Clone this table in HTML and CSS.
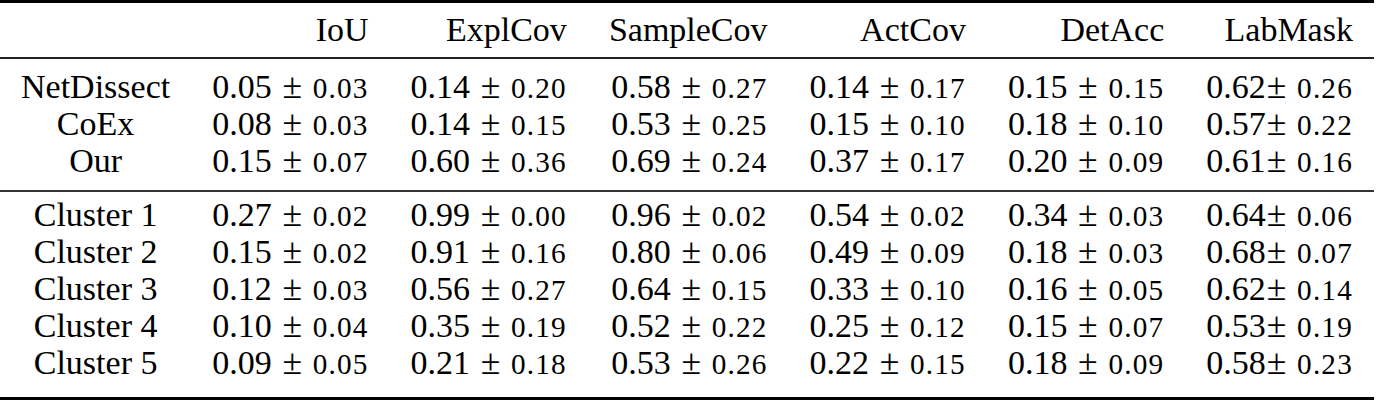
FILE: index.html
```html
<!DOCTYPE html>
<html>
<head>
<meta charset="utf-8">
<link rel="stylesheet" href="styles.css">
</head>
<body>
<table class="results">
  <thead>
    <tr class="head">
      <th class="name"></th>
      <th>IoU</th>
      <th>ExplCov</th>
      <th>SampleCov</th>
      <th>ActCov</th>
      <th>DetAcc</th>
      <th>LabMask</th>
    </tr>
  </thead>
  <tbody>
    <tr class="first">
      <td class="name">NetDissect</td>
      <td>0.05<span class="pm">±</span><span class="sd">0.03</span></td>
      <td>0.14<span class="pm">±</span><span class="sd">0.20</span></td>
      <td>0.58<span class="pm">±</span><span class="sd">0.27</span></td>
      <td>0.14<span class="pm">±</span><span class="sd">0.17</span></td>
      <td>0.15<span class="pm">±</span><span class="sd">0.15</span></td>
      <td>0.62<span class="pm tight">±</span><span class="sd">0.26</span></td>
    </tr>
    <tr>
      <td class="name">CoEx</td>
      <td>0.08<span class="pm">±</span><span class="sd">0.03</span></td>
      <td>0.14<span class="pm">±</span><span class="sd">0.15</span></td>
      <td>0.53<span class="pm">±</span><span class="sd">0.25</span></td>
      <td>0.15<span class="pm">±</span><span class="sd">0.10</span></td>
      <td>0.18<span class="pm">±</span><span class="sd">0.10</span></td>
      <td>0.57<span class="pm tight">±</span><span class="sd">0.22</span></td>
    </tr>
    <tr class="mid">
      <td class="name">Our</td>
      <td>0.15<span class="pm">±</span><span class="sd">0.07</span></td>
      <td>0.60<span class="pm">±</span><span class="sd">0.36</span></td>
      <td>0.69<span class="pm">±</span><span class="sd">0.24</span></td>
      <td>0.37<span class="pm">±</span><span class="sd">0.17</span></td>
      <td>0.20<span class="pm">±</span><span class="sd">0.09</span></td>
      <td>0.61<span class="pm tight">±</span><span class="sd">0.16</span></td>
    </tr>
  </tbody>
  <tbody>
    <tr class="second">
      <td class="name">Cluster 1</td>
      <td>0.27<span class="pm">±</span><span class="sd">0.02</span></td>
      <td>0.99<span class="pm">±</span><span class="sd">0.00</span></td>
      <td>0.96<span class="pm">±</span><span class="sd">0.02</span></td>
      <td>0.54<span class="pm">±</span><span class="sd">0.02</span></td>
      <td>0.34<span class="pm">±</span><span class="sd">0.03</span></td>
      <td>0.64<span class="pm tight">±</span><span class="sd">0.06</span></td>
    </tr>
    <tr>
      <td class="name">Cluster 2</td>
      <td>0.15<span class="pm">±</span><span class="sd">0.02</span></td>
      <td>0.91<span class="pm">±</span><span class="sd">0.16</span></td>
      <td>0.80<span class="pm">±</span><span class="sd">0.06</span></td>
      <td>0.49<span class="pm">±</span><span class="sd">0.09</span></td>
      <td>0.18<span class="pm">±</span><span class="sd">0.03</span></td>
      <td>0.68<span class="pm tight">±</span><span class="sd">0.07</span></td>
    </tr>
    <tr>
      <td class="name">Cluster 3</td>
      <td>0.12<span class="pm">±</span><span class="sd">0.03</span></td>
      <td>0.56<span class="pm">±</span><span class="sd">0.27</span></td>
      <td>0.64<span class="pm">±</span><span class="sd">0.15</span></td>
      <td>0.33<span class="pm">±</span><span class="sd">0.10</span></td>
      <td>0.16<span class="pm">±</span><span class="sd">0.05</span></td>
      <td>0.62<span class="pm tight">±</span><span class="sd">0.14</span></td>
    </tr>
    <tr>
      <td class="name">Cluster 4</td>
      <td>0.10<span class="pm">±</span><span class="sd">0.04</span></td>
      <td>0.35<span class="pm">±</span><span class="sd">0.19</span></td>
      <td>0.52<span class="pm">±</span><span class="sd">0.22</span></td>
      <td>0.25<span class="pm">±</span><span class="sd">0.12</span></td>
      <td>0.15<span class="pm">±</span><span class="sd">0.07</span></td>
      <td>0.53<span class="pm tight">±</span><span class="sd">0.19</span></td>
    </tr>
    <tr class="bottom">
      <td class="name">Cluster 5</td>
      <td>0.09<span class="pm">±</span><span class="sd">0.05</span></td>
      <td>0.21<span class="pm">±</span><span class="sd">0.18</span></td>
      <td>0.53<span class="pm">±</span><span class="sd">0.26</span></td>
      <td>0.22<span class="pm">±</span><span class="sd">0.15</span></td>
      <td>0.18<span class="pm">±</span><span class="sd">0.09</span></td>
      <td>0.58<span class="pm tight">±</span><span class="sd">0.23</span></td>
    </tr>
  </tbody>
</table>
</body>
</html>
```

FILE: styles.css
```css
html, body {
  margin: 0;
  padding: 0;
  background: #ffffff;
}

.results {
  border-collapse: separate;
  border-spacing: 0;
  font-family: "Liberation Serif", "Times New Roman", serif;
  font-size: 34px;
  color: #000000;
}

.results th,
.results td {
  padding: 0 21px;
  height: 37px;
  line-height: 37px;
  font-weight: normal;
  text-align: right;
  white-space: nowrap;
  box-sizing: content-box;
  vertical-align: top;
}

.results .name {
  text-align: center;
}

.head th {
  border-top: 3px solid #000000;
  border-bottom: 2px solid #222222;
  padding-top: 8px;
  padding-bottom: 9px;
}

.first td {
  padding-top: 9px;
}

.second td {
  padding-top: 4px;
}

.mid td {
  padding-bottom: 11px;
  border-bottom: 2px solid #333333;
}

.bottom td {
  padding-bottom: 16px;
  border-bottom: 3px solid #000000;
}

.pm {
  font-family: "Liberation Serif", serif;
  font-size: 1.05em;
  line-height: 0;
  margin: 0 0.3em;
}

.pm.tight {
  margin-left: 0.03em;
}

.sd {
  font-size: 0.86em;
  line-height: 0;
  letter-spacing: 0.04em;
}
```
